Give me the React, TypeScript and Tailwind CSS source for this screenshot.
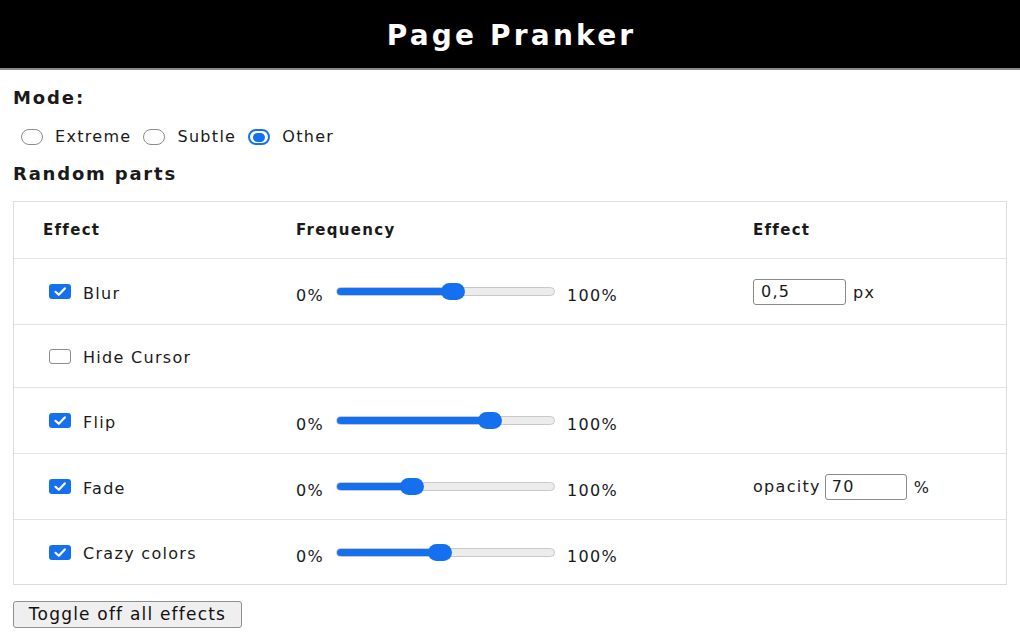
import React from 'react';

type Effect = {
  name: string;
  checked: boolean;
  freq?: number; // 0-100, position of the slider thumb
  extra?: 'blur' | 'opacity';
  height: string;
};

const effects: Effect[] = [
  { name: 'Blur', checked: true, freq: 54, extra: 'blur', height: 'h-[66px]' },
  { name: 'Hide Cursor', checked: false, height: 'h-[63px]' },
  { name: 'Flip', checked: true, freq: 73, height: 'h-[66px]' },
  { name: 'Fade', checked: true, freq: 33, extra: 'opacity', height: 'h-[66px]' },
  { name: 'Crazy colors', checked: true, freq: 47, height: 'h-[65px]' },
];

const Radio = ({ selected }: { selected?: boolean }) =>
  selected ? (
    <span className="w-[22px] h-[16px] rounded-full border-[2px] border-[#1570ef] bg-white flex items-center justify-center shrink-0">
      <span className="w-[12px] h-[9px] rounded-full bg-[#1570ef]" />
    </span>
  ) : (
    <span className="w-[22px] h-[16px] rounded-full border border-[#8c8c8c] bg-white shrink-0" />
  );

const Checkbox = ({ checked }: { checked: boolean }) =>
  checked ? (
    <span className="w-[22px] h-[15px] rounded-[3px] bg-[#1570ef] flex items-center justify-center shrink-0">
      <svg width="22" height="15" viewBox="0 0 22 15">
        <path d="M6.5 7.8 L9.8 10.8 L15.8 4.4" fill="none" stroke="#fff" strokeWidth="2.2" strokeLinecap="round" strokeLinejoin="round" />
      </svg>
    </span>
  ) : (
    <span className="w-[22px] h-[15px] rounded-[3px] border border-[#8c8c8c] bg-white shrink-0" />
  );

const Slider = ({ value }: { value: number }) => {
  // thumb centre moves between 12px and 207px of a 219px track
  const centre = 12 + (195 * value) / 100;
  return (
    <div className="relative w-[219px] h-[17px] flex items-center mx-[12px] shrink-0">
      <div className="w-full h-[9px] rounded-full bg-[#ececec] border border-[#c9c9c9] overflow-hidden">
        <div className="h-full bg-[#1570ef]" style={{ width: centre }} />
      </div>
      <div className="absolute top-0 w-[24px] h-[17px] rounded-full bg-[#1570ef]" style={{ left: centre - 12 }} />
    </div>
  );
};

export default function App() {
  return (
    <div className="min-h-screen bg-white text-[#1a1a1a] font-['DejaVu_Sans',sans-serif] text-[16px] tracking-[1.3px]">
      <header className="h-[70px] bg-black border-b-2 border-[#8a8a8a] flex items-center justify-center">
        <h1 className="text-white font-bold text-[28px] tracking-[3.2px] leading-none pl-[3px] pt-[3px]">Page Pranker</h1>
      </header>

      <div className="px-[13px]">
        <div className="mt-[18px] h-[20px] leading-[20px] font-bold text-[18px] tracking-[1.9px]">Mode:</div>

        <div className="mt-[18px] h-[22px] flex items-center pl-[8px]">
          <Radio />
          <span className="ml-[12px] mr-[12px]">Extreme</span>
          <Radio />
          <span className="ml-[12px] mr-[12px]">Subtle</span>
          <Radio selected />
          <span className="ml-[12px]">Other</span>
        </div>

        <div className="mt-[16px] h-[20px] leading-[20px] font-bold text-[18px] tracking-[1.8px]">Random parts</div>

        <div className="mt-[17px] border border-[#dcdcdc]">
          <div className="h-[56px] grid grid-cols-[253px_457px_1fr] items-center font-bold text-[15px] tracking-[1.3px]">
            <div className="pl-[29px]">Effect</div>
            <div className="pl-[29px]">Frequency</div>
            <div className="pl-[29px]">Effect</div>
          </div>

          {effects.map((e) => (
            <div key={e.name} className={`${e.height} border-t border-[#e2e2e2] grid grid-cols-[253px_457px_1fr] items-center`}>
              <div className="pl-[35px] flex items-center">
                <Checkbox checked={e.checked} />
                <span className="ml-[12px] mt-[4px]">{e.name}</span>
              </div>
              <div className="pl-[29px] flex items-center">
                {e.freq !== undefined && (
                  <>
                    <span className="mt-[9px]">0%</span>
                    <Slider value={e.freq} />
                    <span className="mt-[9px]">100%</span>
                  </>
                )}
              </div>
              <div className="pl-[29px] flex items-center">
                {e.extra === 'blur' && (
                  <>
                    <input
                      readOnly
                      value="0,5"
                      className="w-[93px] h-[26px] border border-[#8a8a8a] rounded-[3px] px-[7px] text-[16px] tracking-[1.3px] outline-none"
                    />
                    <span className="ml-[7px] mt-[2px]">px</span>
                  </>
                )}
                {e.extra === 'opacity' && (
                  <>
                    <span className="mr-[4px]">opacity</span>
                    <input
                      readOnly
                      value="70"
                      className="w-[82px] h-[26px] border border-[#8a8a8a] rounded-[3px] px-[6px] text-[16px] tracking-[1.3px] outline-none"
                    />
                    <span className="ml-[7px] mt-[2px]">%</span>
                  </>
                )}
              </div>
            </div>
          ))}
        </div>

        <button className="mt-[16px] w-[229px] h-[27px] bg-[#efefef] border border-[#8f8f8f] rounded-[3px] text-[17px] tracking-[1.2px] text-[#111] flex items-center justify-center">
          Toggle off all effects
        </button>
      </div>
    </div>
  );
}
